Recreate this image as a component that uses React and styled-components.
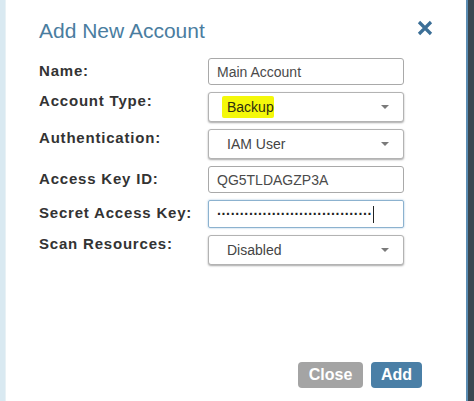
import React from "react";
import styled, { createGlobalStyle } from "styled-components";

const GlobalStyle = createGlobalStyle`
  html, body {
    margin: 0;
    padding: 0;
    background: #ffffff;
  }
  body {
    font-family: "Liberation Sans", Arial, sans-serif;
  }
`;

// outer frame: light strip on the left, dark window edge on the right
const Frame = styled.div`
  display: flex;
  width: 474px;
  height: 401px;
  overflow: hidden;
`;

const LeftStrip = styled.div`
  width: 5px;
  background: #d9e9f1;
  border-right: 1px solid #e8f1f5;
`;

const RightEdge = styled.div`
  width: 6px;
  background: #3a4852;
  border-left: 2px solid #5b8db3;
`;

const Dialog = styled.div`
  flex: 1;
  display: flex;
  flex-direction: column;
  background: #ffffff;
  padding: 19px 44px 13px 33px;
`;

const Header = styled.div`
  display: flex;
  justify-content: space-between;
  align-items: flex-start;
`;

const Title = styled.h2`
  margin: 0;
  font-size: 21px;
  line-height: 24px;
  font-weight: normal;
  color: #4a7d9f;
`;

const CloseIcon = styled.button`
  border: none;
  background: none;
  padding: 0;
  margin: 1px -11px 0 0;
  width: 16px;
  height: 16px;
  cursor: pointer;
  color: #3c6f97;
`;

const Form = styled.div`
  display: flex;
  flex-direction: column;
  gap: 7px;
  margin-top: 15px;
  width: 371px;
`;

const Row = styled.div`
  display: flex;
  align-items: flex-start;
`;

const Label = styled.label`
  width: 169px;
  padding-top: ${(p) => (p.$select ? "0" : "4px")};
  font-size: 15px;
  line-height: 18px;
  font-weight: bold;
  letter-spacing: 0.8px;
  color: #333333;
`;

const TextInput = styled.input`
  box-sizing: border-box;
  width: 196px;
  height: 27px;
  margin: 0;
  padding: 0 8px;
  border: 1px solid #a9a9a9;
  border-radius: 3px;
  font-family: "Liberation Sans", Arial, sans-serif;
  font-size: 14px;
  color: #4a4a4a;
  background: #ffffff;
  outline: none;
`;

const SecretField = styled.div`
  box-sizing: border-box;
  display: flex;
  align-items: center;
  width: 196px;
  height: 28px;
  padding: 0 8px;
  border: 1px solid #8cb2cf;
  border-radius: 2px;
  box-shadow: 0 0 2px rgba(80, 140, 190, 0.6);
  font-size: 14px;
  font-weight: bold;
  color: #222222;
  letter-spacing: -0.1px;

  &::after {
    content: "";
    width: 1px;
    height: 17px;
    margin-left: 1px;
    background: #222222;
  }
`;

const SelectBox = styled.div`
  box-sizing: border-box;
  display: flex;
  align-items: center;
  justify-content: space-between;
  width: 196px;
  height: 30px;
  padding: 0 14px 0 18px;
  border: 1px solid #b3b3b3;
  border-radius: 3px;
  box-shadow: 0 1px 2px rgba(0, 0, 0, 0.35);
  font-size: 14px;
  color: #444444;
  background: #ffffff;
`;

const Value = styled.span`
  padding: 3px 0 3px 5px;
  margin-left: -5px;
  border-radius: 2px;
  line-height: 16px;
  background: ${(p) => (p.$highlight ? "#f4f80a" : "transparent")};
  color: ${(p) => (p.$highlight ? "#2e2e10" : "inherit")};
`;

const Caret = styled.span`
  width: 0;
  height: 0;
  border-left: 4px solid transparent;
  border-right: 4px solid transparent;
  border-top: 4px solid #7a7a7a;
`;

const Footer = styled.div`
  margin-top: auto;
  display: flex;
  justify-content: flex-end;
  gap: 8px;
`;

const Button = styled.button`
  height: 26px;
  padding: 0 ${(p) => (p.$primary ? "10px" : "10.5px")};
  border: none;
  border-radius: 4px;
  background: ${(p) => (p.$primary ? "#4a7fa6" : "#a4a4a4")};
  color: #ffffff;
  font-family: "Liberation Sans", Arial, sans-serif;
  font-size: 16px;
  font-weight: bold;
  cursor: pointer;
`;

const fields = [
  { label: "Name:", kind: "text", value: "Main Account" },
  { label: "Account Type:", kind: "select", value: "Backup", highlight: true },
  { label: "Authentication:", kind: "select", value: "IAM User" },
  { label: "Access Key ID:", kind: "text", value: "QG5TLDAGZP3A" },
  { label: "Secret Access Key:", kind: "secret", value: "\u00b7".repeat(34) },
  { label: "Scan Resources:", kind: "select", value: "Disabled" },
];

const App = () => {
  return (
    <>
      <GlobalStyle />
      <Frame>
        <LeftStrip />
        <Dialog>
          <Header>
            <Title>Add New Account</Title>
            <CloseIcon aria-label="Close">
              <svg width="16" height="16" viewBox="0 0 16 16">
                <path
                  d="M2 2 L14 14 M14 2 L2 14"
                  stroke="currentColor"
                  strokeWidth="3.2"
                  strokeLinecap="butt"
                />
              </svg>
            </CloseIcon>
          </Header>

          <Form>
            {fields.map((f) => (
              <Row key={f.label}>
                <Label $select={f.kind === "select"}>{f.label}</Label>
                {f.kind === "text" && <TextInput defaultValue={f.value} readOnly />}
                {f.kind === "secret" && <SecretField>{f.value}</SecretField>}
                {f.kind === "select" && (
                  <SelectBox>
                    <Value $highlight={f.highlight}>{f.value}</Value>
                    <Caret />
                  </SelectBox>
                )}
              </Row>
            ))}
          </Form>

          <Footer>
            <Button>Close</Button>
            <Button $primary>Add</Button>
          </Footer>
        </Dialog>
        <RightEdge />
      </Frame>
    </>
  );
};

export default App;
